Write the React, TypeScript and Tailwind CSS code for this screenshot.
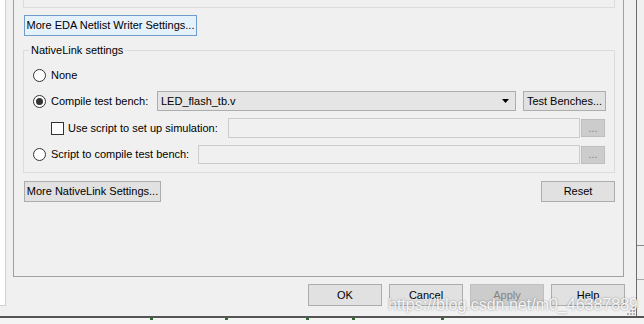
import React from "react";

const Radio = ({ checked }: { checked?: boolean }) => (
  <span className="w-[13px] h-[13px] rounded-full border border-[#333333] bg-white flex items-center justify-center shrink-0">
    {checked && <span className="w-[7px] h-[7px] rounded-full bg-[#333333]" />}
  </span>
);

const Checkbox = () => (
  <span className="w-[13px] h-[13px] border border-[#333333] bg-white shrink-0" />
);

const Button = ({
  label,
  width,
  height = "h-[21px]",
  variant = "normal",
  className = "",
}: {
  label: string;
  width: string;
  height?: string;
  variant?: "normal" | "focus" | "disabled";
  className?: string;
}) => {
  const look =
    variant === "focus"
      ? "bg-[#e5f1fb] border-[#6f9ccb] text-black"
      : variant === "disabled"
      ? "bg-[#cccccc] border-[#bfbfbf] text-[#838383]"
      : "bg-[#e1e1e1] border-[#adadad] text-black";
  return (
    <div
      className={`${width} ${height} ${look} ${className} border flex items-center justify-center shrink-0 whitespace-nowrap`}
    >
      {label}
    </div>
  );
};

const TextBox = ({ width, height = "h-[20px]" }: { width: string; height?: string }) => (
  <div className={`${width} ${height} border border-[#cccccc] bg-[#f0f0f0] shrink-0`} />
);

export default function App() {
  return (
    <div className="w-[644px] h-[324px] bg-[#f0f0f0] relative overflow-hidden font-['Liberation_Sans',Arial,sans-serif] text-[11px] text-black leading-[13px]">
      <div className="flex h-[316px]">
        {/* category tree edge */}
        <div className="w-[13px] shrink-0">
          <div className="w-[6px] h-[306px] bg-white border-r border-b border-[#d0d0d0]" />
        </div>

        {/* page */}
        <div className="w-[612px] shrink-0 flex flex-col">
          <div className="w-[611px] h-[277px] border-l border-r border-b border-[#a0a0a0] flex flex-col">
            <div className="ml-[9px] mr-[8px] h-[8px] border-l border-r border-b border-[#dcdcdc]" />

            <Button
              label="More EDA Netlist Writer Settings..."
              width="w-[173px]"
              variant="focus"
              className="mt-[7px] ml-[10px]"
            />

            <fieldset className="mt-[8px] ml-[9px] mr-[8px] h-[129px] border border-[#dcdcdc] flex flex-col">
              <legend className="ml-[5px] px-[2px] leading-[13px]">NativeLink settings</legend>

              <div className="mt-[8px] h-[20px] flex items-center pl-[9px]">
                <Radio />
                <span className="ml-[5px]">None</span>
              </div>

              <div className="mt-[6px] h-[20px] flex items-center pl-[9px]">
                <Radio checked />
                <span className="ml-[5px] w-[106px]">Compile test bench:</span>
                <div className="w-[359px] h-[20px] bg-[#e5e5e5] border border-[#adadad] flex items-center justify-between pl-[3px] pr-[6px]">
                  <span>LED_flash_tb.v</span>
                  <svg width="7" height="4" viewBox="0 0 7 4">
                    <path d="M0 0 H7 L3.5 4 Z" fill="#000" />
                  </svg>
                </div>
                <Button label="Test Benches..." width="w-[83px]" height="h-[20px]" className="ml-[7px]" />
              </div>

              <div className="mt-[7px] h-[20px] flex items-center pl-[27px]">
                <Checkbox />
                <span className="ml-[4px] w-[160px]">Use script to set up simulation:</span>
                <TextBox width="w-[352px]" />
                <Button label="..." width="w-[24px]" height="h-[18px]" variant="disabled" className="ml-[1px]" />
              </div>

              <div className="mt-[7px] h-[19px] flex items-center pl-[9px]">
                <Radio />
                <span className="ml-[5px] w-[147px]">Script to compile test bench:</span>
                <TextBox width="w-[382px]" height="h-[19px]" />
                <Button label="..." width="w-[24px]" height="h-[18px]" variant="disabled" className="ml-[1px]" />
              </div>
            </fieldset>

            <div className="mt-[8px] ml-[10px] mr-[8px] flex justify-between">
              <Button label="More NativeLink Settings..." width="w-[137px]" />
              <Button label="Reset" width="w-[74px]" />
            </div>
          </div>

          <div className="mt-[7px] flex justify-end gap-[7px]">
            <Button label="OK" width="w-[74px]" height="h-[22px]" />
            <Button label="Cancel" width="w-[74px]" height="h-[22px]" />
            <Button label="Apply" width="w-[74px]" height="h-[22px]" variant="disabled" />
            <Button label="Help" width="w-[74px]" height="h-[22px]" />
          </div>
        </div>

        {/* dialog right edge */}
        <div className="w-[11px] shrink-0 flex flex-col justify-end items-end pb-[1px] pr-[1px]">
          <svg width="8" height="8" viewBox="0 0 8 8">
            <rect x="6" y="0" width="2" height="2" fill="#b4b4b4" />
            <rect x="3" y="3" width="2" height="2" fill="#b4b4b4" />
            <rect x="6" y="3" width="2" height="2" fill="#b4b4b4" />
            <rect x="0" y="6" width="2" height="2" fill="#b4b4b4" />
            <rect x="3" y="6" width="2" height="2" fill="#b4b4b4" />
            <rect x="6" y="6" width="2" height="2" fill="#b4b4b4" />
          </svg>
        </div>
        <div className="w-[8px] shrink-0 border-l border-[#6d6d6d] flex flex-col">
          <div className="h-[245px]" />
          <div className="h-[1px] bg-[#8a8a8a]" />
          <div className="h-[33px]" />
          <div className="h-[1px] bg-[#a8a8a8]" />
        </div>
      </div>

      <div className="h-[2px] bg-[#555555]" />
      <div className="h-[6px] bg-[#f4f4f4] relative">
        <div className="absolute left-[150px] top-0 w-[3px] h-[2px] bg-[#2e6b2e]" />
        <div className="absolute left-[225px] top-0 w-[3px] h-[2px] bg-[#2e6b2e]" />
        <div className="absolute left-[306px] top-0 w-[3px] h-[2px] bg-[#2e6b2e]" />
        <div className="absolute left-[352px] top-0 w-[3px] h-[2px] bg-[#2e6b2e]" />
        <div className="absolute left-[441px] top-0 w-[3px] h-[2px] bg-[#2e6b2e]" />
      </div>

      <div className="absolute left-[388px] top-[296px] text-[16px] leading-[18px] text-white/90 [text-shadow:0_0_2px_rgba(0,0,0,0.45)] whitespace-nowrap pointer-events-none">
        https://blog.csdn.net/m0_46387889
      </div>
    </div>
  );
}
